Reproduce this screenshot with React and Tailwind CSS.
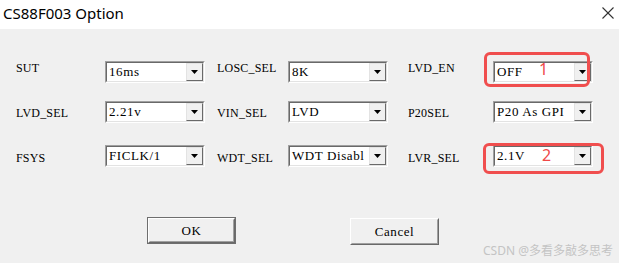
import React from 'react';

const simsun = { fontFamily: '"Liberation Serif", "DejaVu Serif", serif' };

function Combo({ value }) {
  return (
    <div className="w-[100px] h-[22px] border border-t-[#a0a0a0] border-l-[#a0a0a0] border-b-white border-r-white shrink-0">
      <div className="h-full border border-t-[#696969] border-l-[#696969] border-b-[#e3e3e3] border-r-[#e3e3e3] bg-white flex items-stretch">
        <span className="flex-1 pl-[2px] overflow-hidden whitespace-nowrap text-[13px] tracking-[0.6px] leading-[18px] text-black" style={simsun}>
          {value}
        </span>
        <div className="w-[17px] bg-[#f0f0f0] border border-t-[#e3e3e3] border-l-[#e3e3e3] border-b-[#696969] border-r-[#696969] flex items-center justify-center">
          <svg width="7" height="4" viewBox="0 0 7 4">
            <polygon points="0,0 7,0 3.5,4" fill="#000" />
          </svg>
        </div>
      </div>
    </div>
  );
}

function Field({ label, value, labelW, shift }) {
  return (
    <div className="flex items-center">
      <span className={`text-[12px] tracking-[0.2px] text-black whitespace-nowrap ${labelW} ${shift}`} style={simsun}>
        {label}
      </span>
      <Combo value={value} />
    </div>
  );
}

function WinButton({ children, isDefault }) {
  return (
    <div className={`w-[89px] h-[27px] ${isDefault ? 'border border-[#6e6e6e]' : ''}`}>
      <div className="h-full border border-t-white border-l-white border-b-[#696969] border-r-[#696969] bg-[#f0f0f0]">
        <div className="h-full border border-t-[#f0f0f0] border-l-[#f0f0f0] border-b-[#a0a0a0] border-r-[#a0a0a0] flex items-center justify-center text-[13px] tracking-[0.6px] text-black" style={simsun}>
          {children}
        </div>
      </div>
    </div>
  );
}

const rows = [
  { shift: '-mt-[8px]', gap: 'mt-[32px]', cells: [['SUT', '16ms'], ['LOSC_SEL', '8K'], ['LVD_EN', 'OFF']] },
  { shift: 'mt-[1px]', gap: 'mt-[18px]', cells: [['LVD_SEL', '2.21v'], ['VIN_SEL', 'LVD'], ['P20SEL', 'P20 As GPI']] },
  { shift: 'mt-[5px]', gap: 'mt-[21px]', cells: [['FSYS', 'FICLK/1'], ['WDT_SEL', 'WDT Disabl'], ['LVR_SEL', '2.1V']] },
];

const labelWidths = ['w-[89px]', 'w-[71px]', 'w-[85px]'];
const colGaps = ['', 'ml-[12px]', 'ml-[20px]'];

export default function App() {
  return (
    <div className="relative w-[619px] h-[263px] bg-[#f0f0f0] overflow-hidden" style={{ fontFamily: '"Noto Sans", "Open Sans", sans-serif' }}>
      {/* Title bar */}
      <div className="h-[29px] bg-white flex items-center justify-between pl-[3px] pr-[5px]">
        <span className="text-[15px] text-black leading-none -mt-[2px]">CS88F003 Option</span>
        <svg width="12" height="12" viewBox="0 0 12 12" className="-mt-[3px]">
          <line x1="0.5" y1="0.5" x2="11.5" y2="11.5" stroke="#333" strokeWidth="1.1" />
          <line x1="11.5" y1="0.5" x2="0.5" y2="11.5" stroke="#333" strokeWidth="1.1" />
        </svg>
      </div>

      {/* Fields */}
      <div className="pl-[16px]">
        {rows.map((row, i) => (
          <div key={i} className={`flex ${row.gap}`}>
            {row.cells.map(([label, value], j) => (
              <div key={label} className={colGaps[j]}>
                <Field label={label} value={value} labelW={labelWidths[j]} shift={row.shift} />
              </div>
            ))}
          </div>
        ))}
      </div>

      {/* Buttons */}
      <div className="flex mt-[50px] pl-[147px]">
        <WinButton isDefault>OK</WinButton>
        <div className="ml-[114px] mt-[1px]">
          <WinButton>Cancel</WinButton>
        </div>
      </div>

      {/* Annotations */}
      <div className="absolute left-[484px] top-[52px] w-[106px] h-[35px] border-[3px] border-[#f04e4e] rounded-[6px]" />
      <span className="absolute left-[539px] top-[59px] text-[16px] leading-[20px] text-[#f04848]">1</span>
      <div className="absolute left-[483px] top-[143px] w-[121px] h-[31px] border-[3px] border-[#f04e4e] rounded-[6px]" />
      <span className="absolute left-[542px] top-[145px] text-[16px] leading-[20px] text-[#f04848]">2</span>

      {/* Watermark */}
      <span className="absolute right-[6px] bottom-[3px] text-[12px] text-[#c4c4c4]" style={{ fontFamily: '"Noto Sans", "Noto Sans CJK SC", sans-serif' }}>
        CSDN @多看多敲多思考
      </span>
    </div>
  );
}
